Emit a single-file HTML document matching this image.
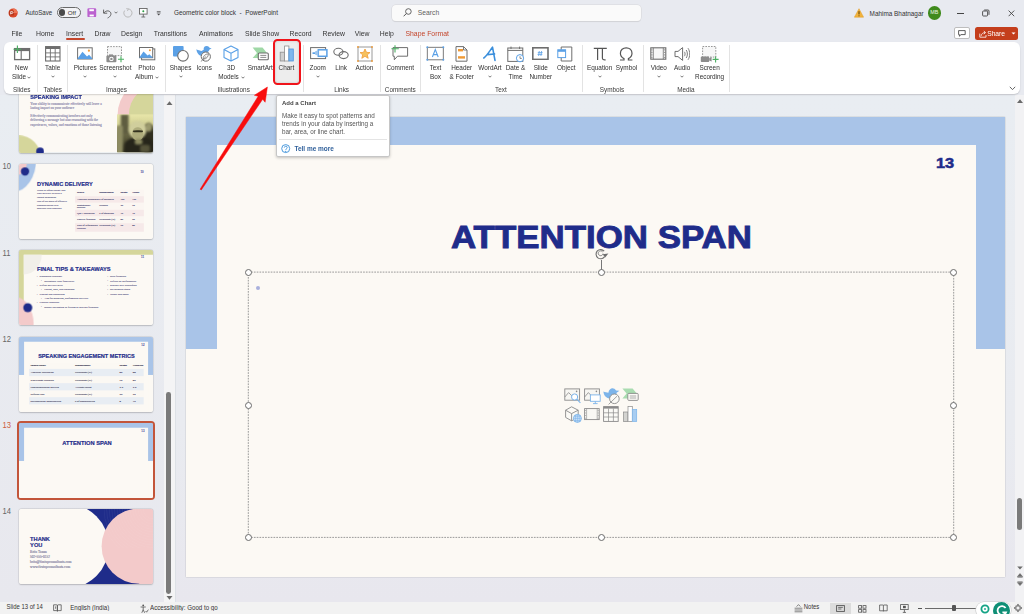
<!DOCTYPE html>
<html><head><meta charset="utf-8"><style>
*{box-sizing:border-box}
html,body{margin:0;padding:0}
body{width:1024px;height:614px;overflow:hidden;position:relative;background:#e7e8ee;font-family:"Liberation Sans",sans-serif;color:#262626}
.a{position:absolute}
.t{position:absolute;white-space:nowrap;line-height:1}
</style></head><body>
<div class="a" style="left:0px;top:0px;width:1024px;height:95px;background:#e8eaf0"></div>
<div class="a" style="left:0px;top:95px;width:164px;height:507px;background:linear-gradient(#e9edf2,#e8e8ee)"></div>
<div class="a" style="left:164px;top:95px;width:11px;height:507px;background:#f4f4f5"></div>
<div class="a" style="left:175px;top:95px;width:840px;height:507px;background:linear-gradient(#e9edf2 0%,#e9ebf0 65%,#e8e7ee 100%)"></div>
<div class="a" style="left:175px;top:95px;width:1px;height:507px;background:#dde1e6"></div>
<div class="a" style="left:1015px;top:95px;width:9px;height:507px;background:#f2f2f4"></div>
<div class="a" style="left:0px;top:602px;width:1024px;height:12px;background:#f2f2f2"></div>
<div class="a" style="left:186px;top:117px;width:819px;height:460px;background:#fcf9f4;box-shadow:0 0 1.2px rgba(0,0,0,.3)"></div>
<div class="a" style="left:186px;top:117px;width:819px;height:232.3px;background:#a9c4e8"></div>
<div class="a" style="left:217px;top:145.3px;width:758.7px;height:431.7px;background:#fcf9f4"></div>
<div class="t" style="left:935.8px;top:156.2px;font-size:14px;font-weight:700;color:#1f2c8a;-webkit-text-stroke:0.5px #1f2c8a;transform-origin:0 0;transform:scaleX(1.17)">13</div>
<div class="t" style="left:451px;top:220.6px;font-size:32px;font-weight:700;color:#1f2c8a;-webkit-text-stroke:0.9px #1f2c8a;transform-origin:0 0;transform:scaleX(1.09)">ATTENTION SPAN</div>
<svg class="a" style="left:0;top:0" width="1024" height="614"><rect x="248.3" y="272.1" width="705.4" height="265.3" fill="none" stroke="#8f8f8f" stroke-width="0.9" stroke-dasharray="1.7 1.1"/></svg>
<div class="a" style="left:600.8px;top:259.6px;width:0.9px;height:10px;background:#777"></div>
<svg class="a" style="left:594px;top:247px" width="16" height="15" viewBox="0 0 16 15"><path d="M10.6 9.6 A4.6 4.6 0 1 1 10.2 4.2" fill="none" stroke="#6e6e6e" stroke-width="1.1"/><path d="M9 6.6 A2.4 2.4 0 1 1 8.6 4.9" fill="none" stroke="#7a7a7a" stroke-width="0.9"/><path d="M8.6 7.2 L14.4 6.4 L11.2 10.4Z" fill="#6e6e6e"/></svg>
<div class="a" style="left:245.0px;top:269.0px;width:7px;height:7px;border:1.3px solid #6b6b6b;border-radius:50%;background:#fff"></div>
<div class="a" style="left:598.0px;top:269.0px;width:7px;height:7px;border:1.3px solid #6b6b6b;border-radius:50%;background:#fff"></div>
<div class="a" style="left:950.3px;top:268.8px;width:7px;height:7px;border:1.3px solid #6b6b6b;border-radius:50%;background:#fff"></div>
<div class="a" style="left:245.0px;top:401.5px;width:7px;height:7px;border:1.3px solid #6b6b6b;border-radius:50%;background:#fff"></div>
<div class="a" style="left:950.3px;top:401.5px;width:7px;height:7px;border:1.3px solid #6b6b6b;border-radius:50%;background:#fff"></div>
<div class="a" style="left:245.0px;top:534.0px;width:7px;height:7px;border:1.3px solid #6b6b6b;border-radius:50%;background:#fff"></div>
<div class="a" style="left:598.0px;top:534.0px;width:7px;height:7px;border:1.3px solid #6b6b6b;border-radius:50%;background:#fff"></div>
<div class="a" style="left:950.3px;top:533.9px;width:7px;height:7px;border:1.3px solid #6b6b6b;border-radius:50%;background:#fff"></div>
<div class="a" style="left:255.5px;top:285.5px;width:4px;height:4px;border-radius:50%;background:#a9b0dc"></div>
<div class="a" style="left:19px;top:77.4px;width:134px;height:75.2px;overflow:hidden;border-radius:2px;box-shadow:0 0 0 0.5px rgba(0,0,0,.10),0 0.5px 1.5px rgba(0,0,0,.16);">
<div class="a" style="left:0;top:0;width:819px;height:460px;background:#fcf9f4;transform-origin:0 0;transform:scale(0.1636)">
<div class="a" style="left:-145px;top:356px;width:280px;height:280px;border-radius:50%;background:#d5d69b"></div>
<div class="a" style="left:105px;top:431px;width:48px;height:48px;border-radius:50%;background:#1f2c8a"></div>
<div class="a" style="left:603px;top:13px;width:432px;height:432px;border-radius:50%;background:#f3caca"></div>
<div class="a" style="left:672px;top:51px;width:356px;height:356px;border-radius:50%;background:#d5d69b"></div>
<div class="a" style="left:600px;top:229px;width:219px;height:231px;overflow:hidden;background:#e3e1a6">
<div class="a" style="left:0px;top:0px;width:219px;height:231px;background:linear-gradient(#e8e6a9 0%,#d4d296 25%,#6b6947 50%,#34331f 100%)"></div>
<div class="a" style="left:22px;top:0px;width:48px;height:120px;background:#5f5d40;filter:blur(6px)"></div>
<div class="a" style="left:-10px;top:70px;width:45px;height:171px;background:#8e8c62;filter:blur(8px)"></div>
<div class="a" style="left:150px;top:60px;width:80px;height:180px;border-radius:40%;background:#2f2e1f;filter:blur(6px)"></div>
<div class="a" style="left:172px;top:48px;width:42px;height:58px;border-radius:50%;background:#9a986c;filter:blur(5px)"></div>
<div class="a" style="left:45px;top:140px;width:185px;height:110px;border-radius:45% 45% 0 0;background:#26251a;filter:blur(5px)"></div>
<div class="a" style="left:70px;top:38px;width:110px;height:112px;border-radius:50%;background:#d0ce9c;filter:blur(5px)"></div>
<div class="a" style="left:92px;top:78px;width:68px;height:82px;border-radius:45%;background:#aeac7c;filter:blur(3px)"></div>
<div class="a" style="left:96px;top:96px;width:62px;height:13px;border-radius:40%;background:#33321f;filter:blur(2.5px)"></div>
<div class="a" style="left:108px;top:150px;width:46px;height:34px;border-radius:30%;background:#8d8b60;filter:blur(5px)"></div>
<div class="a" style="left:140px;top:185px;width:60px;height:46px;border-radius:30%;background:#55533a;filter:blur(6px)"></div>
</div>
<div class="t" style="left:69px;top:104px;font-size:33px;font-weight:700;color:#1f2c8a;-webkit-text-stroke:1.0px #1f2c8a;transform-origin:0 0;transform:scaleX(1.03)">SPEAKING IMPACT</div>
<div class="t" style="left:69px;top:152px;font-size:21px;color:#8886aa;font-weight:400;font-family:'Liberation Serif';-webkit-text-stroke:0.7px #8886aa;">Your ability to communicate effectively will leave a</div>
<div class="t" style="left:69px;top:179px;font-size:21px;color:#8886aa;font-weight:400;font-family:'Liberation Serif';-webkit-text-stroke:0.7px #8886aa;">lasting impact on your audience</div>
<div class="t" style="left:69px;top:230px;font-size:21px;color:#8886aa;font-weight:400;font-family:'Liberation Serif';-webkit-text-stroke:0.7px #8886aa;">Effectively communicating involves not only</div>
<div class="t" style="left:69px;top:255px;font-size:21px;color:#8886aa;font-weight:400;font-family:'Liberation Serif';-webkit-text-stroke:0.7px #8886aa;">delivering a message but also resonating with the</div>
<div class="t" style="left:69px;top:280px;font-size:21px;color:#8886aa;font-weight:400;font-family:'Liberation Serif';-webkit-text-stroke:0.7px #8886aa;">experiences, values, and emotions of those listening</div>
</div></div>
<div class="a" style="left:19px;top:163.8px;width:134px;height:75.2px;overflow:hidden;border-radius:2px;box-shadow:0 0 0 0.5px rgba(0,0,0,.10),0 0.5px 1.5px rgba(0,0,0,.16);">
<div class="a" style="left:0;top:0;width:819px;height:460px;background:#fcf9f4;transform-origin:0 0;transform:scale(0.1636)">
<div class="a" style="left:-170px;top:-230px;width:275px;height:400px;border-radius:50%;background:#a9c4e8"></div>
<div class="a" style="left:-90px;top:-110px;width:140px;height:180px;border-radius:50%;background:#f3caca"></div>
<div class="a" style="left:11px;top:20px;width:51px;height:51px;border-radius:50%;background:#1f2c8a"></div>
<div class="t" style="left:742px;top:38px;font-size:17px;color:#1f2c8a;font-weight:700;font-family:'Liberation Sans';">10</div>
<div class="t" style="left:110px;top:105px;font-size:33px;font-weight:700;color:#1f2c8a;-webkit-text-stroke:1.0px #1f2c8a;transform-origin:0 0;transform:scaleX(1.04)">DYNAMIC DELIVERY</div>
<div class="t" style="left:110px;top:152px;font-size:16px;color:#6a6890;font-weight:400;font-family:'Liberation Serif';-webkit-text-stroke:0.7px #6a6890;">Learn to infuse energy into</div>
<div class="t" style="left:110px;top:172px;font-size:16px;color:#6a6890;font-weight:400;font-family:'Liberation Serif';-webkit-text-stroke:0.7px #6a6890;">your delivery to leave a</div>
<div class="t" style="left:110px;top:192px;font-size:16px;color:#6a6890;font-weight:400;font-family:'Liberation Serif';-webkit-text-stroke:0.7px #6a6890;">lasting impression</div>
<div class="t" style="left:110px;top:222px;font-size:16px;color:#6a6890;font-weight:400;font-family:'Liberation Serif';-webkit-text-stroke:0.7px #6a6890;">One of the goals of effective</div>
<div class="t" style="left:110px;top:242px;font-size:16px;color:#6a6890;font-weight:400;font-family:'Liberation Serif';-webkit-text-stroke:0.7px #6a6890;">communication is to</div>
<div class="t" style="left:110px;top:262px;font-size:16px;color:#6a6890;font-weight:400;font-family:'Liberation Serif';-webkit-text-stroke:0.7px #6a6890;">motivate your audience</div>
<div class="a" style="left:343px;top:157px;width:420px;height:257px;background:#fbf6f2"></div>
<div class="a" style="left:343px;top:197px;width:420px;height:39px;background:#f6e9e9"></div>
<div class="a" style="left:343px;top:280px;width:420px;height:39px;background:#f6e9e9"></div>
<div class="a" style="left:343px;top:362px;width:420px;height:52px;background:#f6e9e9"></div>
<div class="t" style="left:355px;top:168px;font-size:15px;color:#44426e;font-weight:700;font-family:'Liberation Serif';-webkit-text-stroke:0.7px #44426e;">Metric</div>
<div class="t" style="left:490px;top:168px;font-size:15px;color:#44426e;font-weight:700;font-family:'Liberation Serif';-webkit-text-stroke:0.7px #44426e;">Measurement</div>
<div class="t" style="left:620px;top:168px;font-size:15px;color:#44426e;font-weight:700;font-family:'Liberation Serif';-webkit-text-stroke:0.7px #44426e;">Target</div>
<div class="t" style="left:692px;top:168px;font-size:15px;color:#44426e;font-weight:700;font-family:'Liberation Serif';-webkit-text-stroke:0.7px #44426e;">Actual</div>
<div class="t" style="left:355px;top:207px;font-size:16px;color:#55537e;font-weight:400;font-family:'Liberation Serif';-webkit-text-stroke:0.7px #55537e;">Audience attendance</div>
<div class="t" style="left:490px;top:207px;font-size:16px;color:#55537e;font-weight:400;font-family:'Liberation Serif';-webkit-text-stroke:0.7px #55537e;"># of attendees</div>
<div class="t" style="left:620px;top:207px;font-size:16px;color:#55537e;font-weight:400;font-family:'Liberation Serif';-webkit-text-stroke:0.7px #55537e;">150</div>
<div class="t" style="left:692px;top:207px;font-size:16px;color:#55537e;font-weight:400;font-family:'Liberation Serif';-webkit-text-stroke:0.7px #55537e;">145</div>
<div class="t" style="left:355px;top:242px;font-size:16px;color:#55537e;font-weight:400;font-family:'Liberation Serif';-webkit-text-stroke:0.7px #55537e;">Engagement</div>
<div class="t" style="left:490px;top:242px;font-size:16px;color:#55537e;font-weight:400;font-family:'Liberation Serif';-webkit-text-stroke:0.7px #55537e;">Minutes</div>
<div class="t" style="left:620px;top:242px;font-size:16px;color:#55537e;font-weight:400;font-family:'Liberation Serif';-webkit-text-stroke:0.7px #55537e;">40</div>
<div class="t" style="left:692px;top:242px;font-size:16px;color:#55537e;font-weight:400;font-family:'Liberation Serif';-webkit-text-stroke:0.7px #55537e;">75</div>
<div class="t" style="left:355px;top:290px;font-size:16px;color:#55537e;font-weight:400;font-family:'Liberation Serif';-webkit-text-stroke:0.7px #55537e;">Q&amp;A interaction</div>
<div class="t" style="left:490px;top:290px;font-size:16px;color:#55537e;font-weight:400;font-family:'Liberation Serif';-webkit-text-stroke:0.7px #55537e;"># of questions</div>
<div class="t" style="left:620px;top:290px;font-size:16px;color:#55537e;font-weight:400;font-family:'Liberation Serif';-webkit-text-stroke:0.7px #55537e;">10</div>
<div class="t" style="left:692px;top:290px;font-size:16px;color:#55537e;font-weight:400;font-family:'Liberation Serif';-webkit-text-stroke:0.7px #55537e;">15</div>
<div class="t" style="left:355px;top:331px;font-size:16px;color:#55537e;font-weight:400;font-family:'Liberation Serif';-webkit-text-stroke:0.7px #55537e;">Positive feedback</div>
<div class="t" style="left:490px;top:331px;font-size:16px;color:#55537e;font-weight:400;font-family:'Liberation Serif';-webkit-text-stroke:0.7px #55537e;">Percentage (%)</div>
<div class="t" style="left:620px;top:331px;font-size:16px;color:#55537e;font-weight:400;font-family:'Liberation Serif';-webkit-text-stroke:0.7px #55537e;">80</div>
<div class="t" style="left:692px;top:331px;font-size:16px;color:#55537e;font-weight:400;font-family:'Liberation Serif';-webkit-text-stroke:0.7px #55537e;">95</div>
<div class="t" style="left:355px;top:369px;font-size:16px;color:#55537e;font-weight:400;font-family:'Liberation Serif';-webkit-text-stroke:0.7px #55537e;">Rate of information</div>
<div class="t" style="left:490px;top:369px;font-size:16px;color:#55537e;font-weight:400;font-family:'Liberation Serif';-webkit-text-stroke:0.7px #55537e;">Percentage (%)</div>
<div class="t" style="left:620px;top:369px;font-size:16px;color:#55537e;font-weight:400;font-family:'Liberation Serif';-webkit-text-stroke:0.7px #55537e;">70</div>
<div class="t" style="left:692px;top:369px;font-size:16px;color:#55537e;font-weight:400;font-family:'Liberation Serif';-webkit-text-stroke:0.7px #55537e;">85</div>
<div class="t" style="left:355px;top:260px;font-size:15px;color:#5a5888;font-weight:400;font-family:'Liberation Serif';-webkit-text-stroke:0.7px #5a5888;">duration</div>
<div class="t" style="left:355px;top:387px;font-size:15px;color:#5a5888;font-weight:400;font-family:'Liberation Serif';-webkit-text-stroke:0.7px #5a5888;">retention</div>
</div></div>
<div class="a" style="left:19px;top:250.2px;width:134px;height:75.2px;overflow:hidden;border-radius:2px;box-shadow:0 0 0 0.5px rgba(0,0,0,.10),0 0.5px 1.5px rgba(0,0,0,.16);">
<div class="a" style="left:0;top:0;width:819px;height:460px;background:#fcf9f4;transform-origin:0 0;transform:scale(0.1636)">
<div class="a" style="left:0px;top:0px;width:819px;height:29px;background:#d5d69b"></div>
<div class="a" style="left:0px;top:0px;width:29px;height:330px;background:#d5d69b"></div>
<div class="a" style="left:29px;top:29px;width:110px;height:120px;border-radius:0 0 100% 0;background:#f1efe9"></div>
<div class="a" style="left:-150px;top:285px;width:240px;height:340px;border-radius:50%;background:#f3caca"></div>
<div class="a" style="left:26px;top:325px;width:55px;height:55px;border-radius:50%;background:#1f2c8a"></div>
<div class="t" style="left:746px;top:36px;font-size:17px;color:#1f2c8a;font-weight:700;font-family:'Liberation Sans';">11</div>
<div class="t" style="left:110px;top:99px;font-size:33px;font-weight:700;color:#1f2c8a;-webkit-text-stroke:1.0px #1f2c8a;transform-origin:0 0;transform:scaleX(1.06)">FINAL TIPS &amp; TAKEAWAYS</div>
<div class="t" style="left:108px;top:153px;font-size:14px;color:#6d6b90;font-weight:400;font-family:'Liberation Serif';-webkit-text-stroke:0.7px #6d6b90;">•</div>
<div class="t" style="left:126px;top:153px;font-size:17px;color:#6a6890;font-weight:400;font-family:'Liberation Serif';-webkit-text-stroke:0.7px #6a6890;">Consistent rehearsal</div>
<div class="t" style="left:134px;top:181px;font-size:14px;color:#6d6b90;font-weight:400;font-family:'Liberation Serif';-webkit-text-stroke:0.7px #6d6b90;">•</div>
<div class="t" style="left:154px;top:181px;font-size:17px;color:#6a6890;font-weight:400;font-family:'Liberation Serif';-webkit-text-stroke:0.7px #6a6890;">Strengthen your familiarity</div>
<div class="t" style="left:108px;top:207px;font-size:14px;color:#6d6b90;font-weight:400;font-family:'Liberation Serif';-webkit-text-stroke:0.7px #6d6b90;">•</div>
<div class="t" style="left:126px;top:207px;font-size:17px;color:#6a6890;font-weight:400;font-family:'Liberation Serif';-webkit-text-stroke:0.7px #6a6890;">Refine delivery style</div>
<div class="t" style="left:134px;top:233px;font-size:14px;color:#6d6b90;font-weight:400;font-family:'Liberation Serif';-webkit-text-stroke:0.7px #6d6b90;">•</div>
<div class="t" style="left:154px;top:233px;font-size:17px;color:#6a6890;font-weight:400;font-family:'Liberation Serif';-webkit-text-stroke:0.7px #6a6890;">Pacing, tone, and emphasis</div>
<div class="t" style="left:108px;top:262px;font-size:14px;color:#6d6b90;font-weight:400;font-family:'Liberation Serif';-webkit-text-stroke:0.7px #6d6b90;">•</div>
<div class="t" style="left:126px;top:262px;font-size:17px;color:#6a6890;font-weight:400;font-family:'Liberation Serif';-webkit-text-stroke:0.7px #6a6890;">Timing and transitions</div>
<div class="t" style="left:134px;top:287px;font-size:14px;color:#6d6b90;font-weight:400;font-family:'Liberation Serif';-webkit-text-stroke:0.7px #6d6b90;">•</div>
<div class="t" style="left:154px;top:287px;font-size:17px;color:#6a6890;font-weight:400;font-family:'Liberation Serif';-webkit-text-stroke:0.7px #6a6890;">Aim for seamless, professional delivery</div>
<div class="t" style="left:108px;top:311px;font-size:14px;color:#6d6b90;font-weight:400;font-family:'Liberation Serif';-webkit-text-stroke:0.7px #6d6b90;">•</div>
<div class="t" style="left:126px;top:311px;font-size:17px;color:#6a6890;font-weight:400;font-family:'Liberation Serif';-webkit-text-stroke:0.7px #6a6890;">Practice audience</div>
<div class="t" style="left:134px;top:340px;font-size:14px;color:#6d6b90;font-weight:400;font-family:'Liberation Serif';-webkit-text-stroke:0.7px #6d6b90;">•</div>
<div class="t" style="left:154px;top:340px;font-size:17px;color:#6a6890;font-weight:400;font-family:'Liberation Serif';-webkit-text-stroke:0.7px #6a6890;">Gather colleagues or friends to provide feedback</div>
<div class="t" style="left:540px;top:153px;font-size:14px;color:#6d6b90;font-weight:400;font-family:'Liberation Serif';-webkit-text-stroke:0.7px #6d6b90;">•</div>
<div class="t" style="left:556px;top:153px;font-size:17px;color:#6a6890;font-weight:400;font-family:'Liberation Serif';-webkit-text-stroke:0.7px #6a6890;">Seek feedback</div>
<div class="t" style="left:540px;top:181px;font-size:14px;color:#6d6b90;font-weight:400;font-family:'Liberation Serif';-webkit-text-stroke:0.7px #6d6b90;">•</div>
<div class="t" style="left:556px;top:181px;font-size:17px;color:#6a6890;font-weight:400;font-family:'Liberation Serif';-webkit-text-stroke:0.7px #6a6890;">Reflect on performance</div>
<div class="t" style="left:540px;top:207px;font-size:14px;color:#6d6b90;font-weight:400;font-family:'Liberation Serif';-webkit-text-stroke:0.7px #6d6b90;">•</div>
<div class="t" style="left:556px;top:207px;font-size:17px;color:#6a6890;font-weight:400;font-family:'Liberation Serif';-webkit-text-stroke:0.7px #6a6890;">Explore new techniques</div>
<div class="t" style="left:540px;top:233px;font-size:14px;color:#6d6b90;font-weight:400;font-family:'Liberation Serif';-webkit-text-stroke:0.7px #6d6b90;">•</div>
<div class="t" style="left:556px;top:233px;font-size:17px;color:#6a6890;font-weight:400;font-family:'Liberation Serif';-webkit-text-stroke:0.7px #6a6890;">Set personal goals</div>
<div class="t" style="left:540px;top:262px;font-size:14px;color:#6d6b90;font-weight:400;font-family:'Liberation Serif';-webkit-text-stroke:0.7px #6d6b90;">•</div>
<div class="t" style="left:556px;top:262px;font-size:17px;color:#6a6890;font-weight:400;font-family:'Liberation Serif';-webkit-text-stroke:0.7px #6a6890;">Iterate and adapt</div>
</div></div>
<div class="a" style="left:19px;top:336.5px;width:134px;height:75.2px;overflow:hidden;border-radius:2px;box-shadow:0 0 0 0.5px rgba(0,0,0,.10),0 0.5px 1.5px rgba(0,0,0,.16);">
<div class="a" style="left:0;top:0;width:819px;height:460px;background:#fcf9f4;transform-origin:0 0;transform:scale(0.1636)">
<div class="a" style="left:0px;top:0px;width:819px;height:232px;background:#a9c4e8"></div>
<div class="a" style="left:31px;top:29px;width:758px;height:431px;background:#fcf9f4"></div>
<div class="t" style="left:748px;top:38px;font-size:17px;color:#1f2c8a;font-weight:700;font-family:'Liberation Sans';">12</div>
<div class="t" style="left:117px;top:100px;font-size:33px;font-weight:700;color:#1f2c8a;-webkit-text-stroke:1.0px #1f2c8a;transform-origin:0 0;transform:scaleX(1.025)">SPEAKING ENGAGEMENT METRICS</div>
<div class="a" style="left:62px;top:160px;width:700px;height:255px;background:#fbf8f3"></div>
<div class="a" style="left:62px;top:195px;width:700px;height:44px;background:#e8edf3"></div>
<div class="a" style="left:62px;top:282px;width:700px;height:44px;background:#e8edf3"></div>
<div class="a" style="left:62px;top:368px;width:700px;height:44px;background:#e8edf3"></div>
<div class="t" style="left:70px;top:165px;font-size:16px;color:#3e3c55;font-weight:700;font-family:'Liberation Serif';-webkit-text-stroke:0.7px #3e3c55;">Impact factor</div>
<div class="t" style="left:342px;top:165px;font-size:16px;color:#3e3c55;font-weight:700;font-family:'Liberation Serif';-webkit-text-stroke:0.7px #3e3c55;">Measurement</div>
<div class="t" style="left:615px;top:165px;font-size:16px;color:#3e3c55;font-weight:700;font-family:'Liberation Serif';-webkit-text-stroke:0.7px #3e3c55;">Target</div>
<div class="t" style="left:696px;top:165px;font-size:16px;color:#3e3c55;font-weight:700;font-family:'Liberation Serif';-webkit-text-stroke:0.7px #3e3c55;">Achieved</div>
<div class="t" style="left:70px;top:207px;font-size:17px;color:#55536e;font-weight:400;font-family:'Liberation Serif';-webkit-text-stroke:0.7px #55536e;">Audience interaction</div>
<div class="t" style="left:342px;top:207px;font-size:17px;color:#55536e;font-weight:400;font-family:'Liberation Serif';-webkit-text-stroke:0.7px #55536e;">Percentage (%)</div>
<div class="t" style="left:615px;top:207px;font-size:17px;color:#55536e;font-weight:400;font-family:'Liberation Serif';-webkit-text-stroke:0.7px #55536e;">85</div>
<div class="t" style="left:696px;top:207px;font-size:17px;color:#55536e;font-weight:400;font-family:'Liberation Serif';-webkit-text-stroke:0.7px #55536e;">88</div>
<div class="t" style="left:70px;top:254px;font-size:17px;color:#55536e;font-weight:400;font-family:'Liberation Serif';-webkit-text-stroke:0.7px #55536e;">Knowledge retention</div>
<div class="t" style="left:342px;top:254px;font-size:17px;color:#55536e;font-weight:400;font-family:'Liberation Serif';-webkit-text-stroke:0.7px #55536e;">Percentage (%)</div>
<div class="t" style="left:615px;top:254px;font-size:17px;color:#55536e;font-weight:400;font-family:'Liberation Serif';-webkit-text-stroke:0.7px #55536e;">75</div>
<div class="t" style="left:696px;top:254px;font-size:17px;color:#55536e;font-weight:400;font-family:'Liberation Serif';-webkit-text-stroke:0.7px #55536e;">80</div>
<div class="t" style="left:70px;top:296px;font-size:17px;color:#55536e;font-weight:400;font-family:'Liberation Serif';-webkit-text-stroke:0.7px #55536e;">Post-presentation surveys</div>
<div class="t" style="left:342px;top:296px;font-size:17px;color:#55536e;font-weight:400;font-family:'Liberation Serif';-webkit-text-stroke:0.7px #55536e;">Average rating</div>
<div class="t" style="left:615px;top:296px;font-size:17px;color:#55536e;font-weight:400;font-family:'Liberation Serif';-webkit-text-stroke:0.7px #55536e;">4.2</div>
<div class="t" style="left:696px;top:296px;font-size:17px;color:#55536e;font-weight:400;font-family:'Liberation Serif';-webkit-text-stroke:0.7px #55536e;">4.5</div>
<div class="t" style="left:70px;top:338px;font-size:17px;color:#55536e;font-weight:400;font-family:'Liberation Serif';-webkit-text-stroke:0.7px #55536e;">Referral rate</div>
<div class="t" style="left:342px;top:338px;font-size:17px;color:#55536e;font-weight:400;font-family:'Liberation Serif';-webkit-text-stroke:0.7px #55536e;">Percentage (%)</div>
<div class="t" style="left:615px;top:338px;font-size:17px;color:#55536e;font-weight:400;font-family:'Liberation Serif';-webkit-text-stroke:0.7px #55536e;">30</div>
<div class="t" style="left:696px;top:338px;font-size:17px;color:#55536e;font-weight:400;font-family:'Liberation Serif';-webkit-text-stroke:0.7px #55536e;">32</div>
<div class="t" style="left:70px;top:383px;font-size:17px;color:#55536e;font-weight:400;font-family:'Liberation Serif';-webkit-text-stroke:0.7px #55536e;">Collaboration opportunities</div>
<div class="t" style="left:342px;top:383px;font-size:17px;color:#55536e;font-weight:400;font-family:'Liberation Serif';-webkit-text-stroke:0.7px #55536e;"># of opportunities</div>
<div class="t" style="left:615px;top:383px;font-size:17px;color:#55536e;font-weight:400;font-family:'Liberation Serif';-webkit-text-stroke:0.7px #55536e;">8</div>
<div class="t" style="left:696px;top:383px;font-size:17px;color:#55536e;font-weight:400;font-family:'Liberation Serif';-webkit-text-stroke:0.7px #55536e;">10</div>
</div></div>
<div class="a" style="left:17px;top:420.9px;width:138px;height:79.2px;border:2px solid #c3553a;border-radius:4px"></div>
<div class="a" style="left:19px;top:422.9px;width:134px;height:75.2px;overflow:hidden;border-radius:2px;box-shadow:0 0 0 0.5px rgba(0,0,0,.10),0 0.5px 1.5px rgba(0,0,0,.16);border-radius:1.5px;box-shadow:none">
<div class="a" style="left:0;top:0;width:819px;height:460px;background:#fcf9f4;transform-origin:0 0;transform:scale(0.1636)">
<div class="a" style="left:0px;top:0px;width:819px;height:232px;background:#a9c4e8"></div>
<div class="a" style="left:31px;top:29px;width:758px;height:431px;background:#fcf9f4"></div>
<div class="t" style="left:748px;top:38px;font-size:17px;color:#1f2c8a;font-weight:700;font-family:'Liberation Sans';">13</div>
<div class="t" style="left:264px;top:104px;font-size:33px;font-weight:700;color:#1f2c8a;-webkit-text-stroke:1px #1f2c8a;transform-origin:0 0;transform:scaleX(1.063)">ATTENTION SPAN</div>
</div></div>
<div class="a" style="left:19px;top:509.3px;width:134px;height:75.2px;overflow:hidden;border-radius:2px;box-shadow:0 0 0 0.5px rgba(0,0,0,.10),0 0.5px 1.5px rgba(0,0,0,.16);">
<div class="a" style="left:0;top:0;width:819px;height:460px;background:#fcf9f4;transform-origin:0 0;transform:scale(0.1636)">
<div class="a" style="left:290px;top:0px;width:529px;height:460px;background:#1f2c8a"></div>
<div class="a" style="left:31px;top:-32px;width:518px;height:518px;border-radius:50%;background:#fcf9f4"></div>
<div class="a" style="left:505px;top:-3px;width:460px;height:460px;border-radius:50%;background:#f3caca"></div>
<div class="a" style="left:735px;top:0px;width:84px;height:460px;background:#f3caca"></div>
<div class="a" style="left:520px;top:0;width:299px;height:240px;overflow:hidden">
<div class="a" style="left:239px;top:-60px;width:120px;height:120px;border-radius:50%;border:1.4px solid rgba(255,255,255,.30)"></div>
<div class="a" style="left:223px;top:-76px;width:152px;height:152px;border-radius:50%;border:1.4px solid rgba(255,255,255,.30)"></div>
<div class="a" style="left:207px;top:-92px;width:184px;height:184px;border-radius:50%;border:1.4px solid rgba(255,255,255,.30)"></div>
<div class="a" style="left:191px;top:-108px;width:216px;height:216px;border-radius:50%;border:1.4px solid rgba(255,255,255,.30)"></div>
<div class="a" style="left:175px;top:-124px;width:248px;height:248px;border-radius:50%;border:1.4px solid rgba(255,255,255,.30)"></div>
<div class="a" style="left:159px;top:-140px;width:280px;height:280px;border-radius:50%;border:1.4px solid rgba(255,255,255,.30)"></div>
<div class="a" style="left:143px;top:-156px;width:312px;height:312px;border-radius:50%;border:1.4px solid rgba(255,255,255,.30)"></div>
<div class="a" style="left:127px;top:-172px;width:344px;height:344px;border-radius:50%;border:1.4px solid rgba(255,255,255,.30)"></div>
<div class="a" style="left:111px;top:-188px;width:376px;height:376px;border-radius:50%;border:1.4px solid rgba(255,255,255,.30)"></div>
<div class="a" style="left:95px;top:-204px;width:408px;height:408px;border-radius:50%;border:1.4px solid rgba(255,255,255,.30)"></div>
<div class="a" style="left:79px;top:-220px;width:440px;height:440px;border-radius:50%;border:1.4px solid rgba(255,255,255,.30)"></div>
<div class="a" style="left:63px;top:-236px;width:472px;height:472px;border-radius:50%;border:1.4px solid rgba(255,255,255,.30)"></div>
<div class="a" style="left:47px;top:-252px;width:504px;height:504px;border-radius:50%;border:1.4px solid rgba(255,255,255,.30)"></div>
<div class="a" style="left:31px;top:-268px;width:536px;height:536px;border-radius:50%;border:1.4px solid rgba(255,255,255,.30)"></div>
<div class="a" style="left:15px;top:-284px;width:568px;height:568px;border-radius:50%;border:1.4px solid rgba(255,255,255,.30)"></div>
<div class="a" style="left:-1px;top:-300px;width:600px;height:600px;border-radius:50%;border:1.4px solid rgba(255,255,255,.30)"></div>
<div class="a" style="left:-17px;top:-316px;width:632px;height:632px;border-radius:50%;border:1.4px solid rgba(255,255,255,.30)"></div>
</div>
<div class="t" style="left:68px;top:166px;font-size:32px;font-weight:700;color:#1f2c8a;-webkit-text-stroke:1.0px #1f2c8a;transform-origin:0 0;transform:scaleX(1.08)">THANK</div>
<div class="t" style="left:68px;top:203px;font-size:32px;font-weight:700;color:#1f2c8a;-webkit-text-stroke:1.0px #1f2c8a;transform-origin:0 0;transform:scaleX(1.08)">YOU</div>
<div class="t" style="left:68px;top:254px;font-size:21.4px;color:#7f7da0;font-weight:400;font-family:'Liberation Serif';-webkit-text-stroke:0.7px #7f7da0;">Brita Tamm</div>
<div class="t" style="left:68px;top:284px;font-size:21.4px;color:#7f7da0;font-weight:400;font-family:'Liberation Serif';-webkit-text-stroke:0.7px #7f7da0;">502-555-0152</div>
<div class="t" style="left:68px;top:314px;font-size:21.4px;color:#7f7da0;font-weight:400;font-family:'Liberation Serif';-webkit-text-stroke:0.7px #7f7da0;">brita@firstupconsultants.com</div>
<div class="t" style="left:68px;top:344px;font-size:21.4px;color:#7f7da0;font-weight:400;font-family:'Liberation Serif';-webkit-text-stroke:0.7px #7f7da0;">www.firstupconsultants.com</div>
</div></div>
<div class="t" style="left:2.6px;top:162.0px;font-size:7.6px;color:#666;transform-origin:0 0;transform:scaleY(1.1)">10</div>
<div class="t" style="left:2.6px;top:248.8px;font-size:7.6px;color:#666;transform-origin:0 0;transform:scaleY(1.1)">11</div>
<div class="t" style="left:2.6px;top:335.2px;font-size:7.6px;color:#666;transform-origin:0 0;transform:scaleY(1.1)">12</div>
<div class="t" style="left:2.6px;top:420.8px;font-size:7.6px;color:#cd5d3e;transform-origin:0 0;transform:scaleY(1.1)">13</div>
<div class="t" style="left:2.6px;top:507.2px;font-size:7.6px;color:#666;transform-origin:0 0;transform:scaleY(1.1)">14</div>
<div class="a" style="left:4px;top:42px;width:1016px;height:52px;background:#fff;border-radius:6px;box-shadow:0 1px 1.5px rgba(0,0,0,.16)"></div>
<div class="a" style="left:36.9px;top:45px;width:1px;height:47px;background:#e3e3e3"></div>
<div class="a" style="left:67.4px;top:45px;width:1px;height:47px;background:#e3e3e3"></div>
<div class="a" style="left:164.8px;top:45px;width:1px;height:47px;background:#e3e3e3"></div>
<div class="a" style="left:302.5px;top:45px;width:1px;height:47px;background:#e3e3e3"></div>
<div class="a" style="left:380.3px;top:45px;width:1px;height:47px;background:#e3e3e3"></div>
<div class="a" style="left:419.8px;top:45px;width:1px;height:47px;background:#e3e3e3"></div>
<div class="a" style="left:581.6px;top:45px;width:1px;height:47px;background:#e3e3e3"></div>
<div class="a" style="left:643.3px;top:45px;width:1px;height:47px;background:#e3e3e3"></div>
<div class="a" style="left:729.2px;top:45px;width:1px;height:47px;background:#e3e3e3"></div>
<div class="a" style="left:273.1px;top:39.1px;width:28.4px;height:46.1px;background:#ededed;border:2.3px solid #f0141b;border-radius:4.5px;box-shadow:inset 0 0 2.5px rgba(0,0,0,.18)"></div>
<div class="t" style="left:-78.50px;width:200px;text-align:center;top:65.27px;font-size:6.4px;color:#303030;font-weight:400;">New</div>
<div class="t" style="left:-81.00px;width:200px;text-align:center;top:74.07px;font-size:6.4px;color:#303030;font-weight:400;">Slide</div>
<div class="t" style="left:-47.40px;width:200px;text-align:center;top:65.27px;font-size:6.4px;color:#303030;font-weight:400;">Table</div>
<svg class="a" style="left:50.6px;top:74.9px" width="4" height="3" viewBox="0 0 4 3"><path d="M0.5 0.7 L2 2.2 L3.5 0.7" fill="none" stroke="#555" stroke-width="0.8"/></svg>
<div class="t" style="left:-14.80px;width:200px;text-align:center;top:65.27px;font-size:6.4px;color:#303030;font-weight:400;">Pictures</div>
<svg class="a" style="left:83.2px;top:74.9px" width="4" height="3" viewBox="0 0 4 3"><path d="M0.5 0.7 L2 2.2 L3.5 0.7" fill="none" stroke="#555" stroke-width="0.8"/></svg>
<div class="t" style="left:15.30px;width:200px;text-align:center;top:65.27px;font-size:6.4px;color:#303030;font-weight:400;">Screenshot</div>
<svg class="a" style="left:113.3px;top:74.9px" width="4" height="3" viewBox="0 0 4 3"><path d="M0.5 0.7 L2 2.2 L3.5 0.7" fill="none" stroke="#555" stroke-width="0.8"/></svg>
<div class="t" style="left:46.60px;width:200px;text-align:center;top:65.27px;font-size:6.4px;color:#303030;font-weight:400;">Photo</div>
<div class="t" style="left:44.10px;width:200px;text-align:center;top:74.07px;font-size:6.4px;color:#303030;font-weight:400;">Album</div>
<div class="t" style="left:80.50px;width:200px;text-align:center;top:65.27px;font-size:6.4px;color:#303030;font-weight:400;">Shapes</div>
<svg class="a" style="left:178.5px;top:74.9px" width="4" height="3" viewBox="0 0 4 3"><path d="M0.5 0.7 L2 2.2 L3.5 0.7" fill="none" stroke="#555" stroke-width="0.8"/></svg>
<div class="t" style="left:104.20px;width:200px;text-align:center;top:65.27px;font-size:6.4px;color:#303030;font-weight:400;">Icons</div>
<div class="t" style="left:131.00px;width:200px;text-align:center;top:65.27px;font-size:6.4px;color:#303030;font-weight:400;">3D</div>
<div class="t" style="left:128.50px;width:200px;text-align:center;top:74.07px;font-size:6.4px;color:#303030;font-weight:400;">Models</div>
<div class="t" style="left:160.30px;width:200px;text-align:center;top:65.27px;font-size:6.4px;color:#303030;font-weight:400;">SmartArt</div>
<div class="t" style="left:186.40px;width:200px;text-align:center;top:65.27px;font-size:6.4px;color:#303030;font-weight:400;">Chart</div>
<div class="t" style="left:217.70px;width:200px;text-align:center;top:65.27px;font-size:6.4px;color:#303030;font-weight:400;">Zoom</div>
<svg class="a" style="left:315.7px;top:74.9px" width="4" height="3" viewBox="0 0 4 3"><path d="M0.5 0.7 L2 2.2 L3.5 0.7" fill="none" stroke="#555" stroke-width="0.8"/></svg>
<div class="t" style="left:241.20px;width:200px;text-align:center;top:65.27px;font-size:6.4px;color:#303030;font-weight:400;">Link</div>
<div class="t" style="left:264.40px;width:200px;text-align:center;top:65.27px;font-size:6.4px;color:#303030;font-weight:400;">Action</div>
<div class="t" style="left:300.30px;width:200px;text-align:center;top:65.27px;font-size:6.4px;color:#303030;font-weight:400;">Comment</div>
<div class="t" style="left:335.50px;width:200px;text-align:center;top:65.27px;font-size:6.4px;color:#303030;font-weight:400;">Text</div>
<div class="t" style="left:335.50px;width:200px;text-align:center;top:74.07px;font-size:6.4px;color:#303030;font-weight:400;">Box</div>
<div class="t" style="left:361.70px;width:200px;text-align:center;top:65.27px;font-size:6.4px;color:#303030;font-weight:400;">Header</div>
<div class="t" style="left:361.70px;width:200px;text-align:center;top:74.07px;font-size:6.4px;color:#303030;font-weight:400;">&amp; Footer</div>
<div class="t" style="left:390.00px;width:200px;text-align:center;top:65.27px;font-size:6.4px;color:#303030;font-weight:400;">WordArt</div>
<svg class="a" style="left:488px;top:74.9px" width="4" height="3" viewBox="0 0 4 3"><path d="M0.5 0.7 L2 2.2 L3.5 0.7" fill="none" stroke="#555" stroke-width="0.8"/></svg>
<div class="t" style="left:415.50px;width:200px;text-align:center;top:65.27px;font-size:6.4px;color:#303030;font-weight:400;">Date &amp;</div>
<div class="t" style="left:415.50px;width:200px;text-align:center;top:74.07px;font-size:6.4px;color:#303030;font-weight:400;">Time</div>
<div class="t" style="left:440.80px;width:200px;text-align:center;top:65.27px;font-size:6.4px;color:#303030;font-weight:400;">Slide</div>
<div class="t" style="left:440.80px;width:200px;text-align:center;top:74.07px;font-size:6.4px;color:#303030;font-weight:400;">Number</div>
<div class="t" style="left:466.30px;width:200px;text-align:center;top:65.27px;font-size:6.4px;color:#303030;font-weight:400;">Object</div>
<div class="t" style="left:499.60px;width:200px;text-align:center;top:65.27px;font-size:6.4px;color:#303030;font-weight:400;">Equation</div>
<svg class="a" style="left:597.6px;top:74.9px" width="4" height="3" viewBox="0 0 4 3"><path d="M0.5 0.7 L2 2.2 L3.5 0.7" fill="none" stroke="#555" stroke-width="0.8"/></svg>
<div class="t" style="left:526.50px;width:200px;text-align:center;top:65.27px;font-size:6.4px;color:#303030;font-weight:400;">Symbol</div>
<div class="t" style="left:558.80px;width:200px;text-align:center;top:65.27px;font-size:6.4px;color:#303030;font-weight:400;">Video</div>
<svg class="a" style="left:656.8px;top:74.9px" width="4" height="3" viewBox="0 0 4 3"><path d="M0.5 0.7 L2 2.2 L3.5 0.7" fill="none" stroke="#555" stroke-width="0.8"/></svg>
<div class="t" style="left:582.20px;width:200px;text-align:center;top:65.27px;font-size:6.4px;color:#303030;font-weight:400;">Audio</div>
<svg class="a" style="left:680.2px;top:74.9px" width="4" height="3" viewBox="0 0 4 3"><path d="M0.5 0.7 L2 2.2 L3.5 0.7" fill="none" stroke="#555" stroke-width="0.8"/></svg>
<div class="t" style="left:609.60px;width:200px;text-align:center;top:65.27px;font-size:6.4px;color:#303030;font-weight:400;">Screen</div>
<div class="t" style="left:609.60px;width:200px;text-align:center;top:74.07px;font-size:6.4px;color:#303030;font-weight:400;">Recording</div>
<svg class="a" style="left:27px;top:75.9px" width="4" height="3" viewBox="0 0 4 3"><path d="M0.5 0.7 L2 2.2 L3.5 0.7" fill="none" stroke="#555" stroke-width="0.8"/></svg>
<svg class="a" style="left:155px;top:75.9px" width="4" height="3" viewBox="0 0 4 3"><path d="M0.5 0.7 L2 2.2 L3.5 0.7" fill="none" stroke="#555" stroke-width="0.8"/></svg>
<svg class="a" style="left:241px;top:75.9px" width="4" height="3" viewBox="0 0 4 3"><path d="M0.5 0.7 L2 2.2 L3.5 0.7" fill="none" stroke="#555" stroke-width="0.8"/></svg>
<div class="t" style="left:-78.30px;width:200px;text-align:center;top:87.17px;font-size:6.4px;color:#3a3a3a;font-weight:400;">Slides</div>
<div class="t" style="left:-47.30px;width:200px;text-align:center;top:87.17px;font-size:6.4px;color:#3a3a3a;font-weight:400;">Tables</div>
<div class="t" style="left:16.50px;width:200px;text-align:center;top:87.17px;font-size:6.4px;color:#3a3a3a;font-weight:400;">Images</div>
<div class="t" style="left:133.70px;width:200px;text-align:center;top:87.17px;font-size:6.4px;color:#3a3a3a;font-weight:400;">Illustrations</div>
<div class="t" style="left:241.60px;width:200px;text-align:center;top:87.17px;font-size:6.4px;color:#3a3a3a;font-weight:400;">Links</div>
<div class="t" style="left:300.30px;width:200px;text-align:center;top:87.17px;font-size:6.4px;color:#3a3a3a;font-weight:400;">Comments</div>
<div class="t" style="left:400.90px;width:200px;text-align:center;top:87.17px;font-size:6.4px;color:#3a3a3a;font-weight:400;">Text</div>
<div class="t" style="left:512.00px;width:200px;text-align:center;top:87.17px;font-size:6.4px;color:#3a3a3a;font-weight:400;">Symbols</div>
<div class="t" style="left:585.90px;width:200px;text-align:center;top:87.17px;font-size:6.4px;color:#3a3a3a;font-weight:400;">Media</div>
<svg class="a" style="left:13px;top:45px" width="18" height="16" viewBox="0 0 18 16"><rect x="1.6" y="3.6" width="15" height="11" fill="#fff" stroke="#6e6e6e" stroke-width="1.3"/><rect x="1.6" y="3.3" width="15" height="2.8" fill="#6e6e6e"/><line x1="8.2" y1="6" x2="8.2" y2="14.5" stroke="#6e6e6e" stroke-width="1.1"/><path d="M4.4 0.4V8M0.5 4.3H8.2" stroke="#4caf63" stroke-width="1.1"/></svg>
<svg class="a" style="left:45px;top:46px" width="16" height="16" viewBox="0 0 16 16"><rect x="0.6" y="0.6" width="14.4" height="14.4" fill="#fff" stroke="#6e6e6e" stroke-width="1.1"/><rect x="0.6" y="0.6" width="14.4" height="2.4" fill="#6e6e6e"/><path d="M5.4 3V15M10.2 3V15M0.6 6.9H15M0.6 10.9H15" stroke="#6e6e6e" stroke-width="0.9"/></svg>
<svg class="a" style="left:77px;top:47px" width="16" height="13" viewBox="0 0 16 13"><rect x="0.6" y="0.8" width="14.6" height="11.2" fill="#fff" stroke="#6e6e6e" stroke-width="1"/><path d="M0.6 11.4 L5.5 4.8 L10 9.5 L12 7.8 L15 11 L15 12 L0.6 12Z" fill="#5aa0e6"/><circle cx="11.9" cy="3.7" r="1.1" fill="#ef9a36"/></svg>
<svg class="a" style="left:106px;top:46px" width="19" height="17" viewBox="0 0 19 17"><rect x="1.5" y="0.6" width="14" height="9" fill="#f7f7f7" stroke="#8a8a8a" stroke-width="0.9" stroke-dasharray="1.6 1.2"/><rect x="0.4" y="9.6" width="10" height="6.6" rx="1" fill="#8c8c8c"/><rect x="3" y="8.4" width="4" height="1.6" fill="#8c8c8c"/><circle cx="5.4" cy="12.9" r="2.2" fill="#fff"/><circle cx="5.4" cy="12.9" r="1.2" fill="#8c8c8c"/><path d="M15 10.2V16.2M12 13.2H18" stroke="#4caf63" stroke-width="1.1"/></svg>
<svg class="a" style="left:139px;top:47px" width="17" height="14" viewBox="0 0 17 14"><rect x="2.6" y="1.9" width="13.2" height="10.9" fill="#fff" stroke="#6e6e6e" stroke-width="1"/><rect x="0.5" y="0.5" width="13.2" height="10.2" fill="#fff" stroke="#6e6e6e" stroke-width="1"/><path d="M0.5 10.2 L4.5 4.6 L8.6 8.6 L10.3 7.2 L13.6 10.2 L13.6 10.7 L0.5 10.7Z" fill="#5aa0e6"/><circle cx="10.9" cy="3.3" r="1" fill="#ef9a36"/></svg>
<svg class="a" style="left:172px;top:45px" width="18" height="17" viewBox="0 0 18 17"><rect x="1" y="1" width="10.6" height="10.6" rx="1" fill="#5aa0e6"/><circle cx="11" cy="10.8" r="5.3" fill="#fff" stroke="#6e6e6e" stroke-width="1.1"/></svg>
<svg class="a" style="left:196px;top:45px" width="16" height="17" viewBox="0 0 16 17"><circle cx="10.6" cy="3.8" r="2.9" fill="#5ea2e6"/><path d="M12.8 2.6 L15.6 3.4 L12.8 4.8Z" fill="#5ea2e6"/><path d="M0.4 4.2 C2.2 5.6 4 5.2 5.6 6 L8 4.4 C9.6 4.6 11.6 5.4 12.4 6.8 C12.2 9.4 9.8 11.2 6.6 11.2 C3 11 0.8 8 0.4 4.2Z" fill="#5ea2e6"/><circle cx="9.8" cy="11.6" r="4.6" fill="#fff" stroke="#6e6e6e" stroke-width="1"/><path d="M7 14.2 C7 11.2 9 9 12.4 8.8 C12.4 11.8 10.4 14.2 7 14.2Z" fill="none" stroke="#6e6e6e" stroke-width="0.8"/><path d="M4.8 16.6 L10.2 11.4" stroke="#6e6e6e" stroke-width="0.8"/></svg>
<svg class="a" style="left:223px;top:45px" width="16" height="17" viewBox="0 0 16 17"><path d="M8 1 L15 4.6 V12.4 L8 16 L1 12.4 V4.6Z M1 4.6 L8 8.2 L15 4.6 M8 8.2 V16" fill="#fff" stroke="#5aa0e6" stroke-width="1.1" stroke-linejoin="round"/></svg>
<svg class="a" style="left:252px;top:47px" width="18" height="14" viewBox="0 0 18 14"><path d="M0.6 0.6 H10.5 L15 6 L10.5 11 H0.6 L5 6Z" fill="#9fd8a6"/><rect x="6.3" y="6" width="10" height="6.8" rx="1" fill="#fff" stroke="#6e6e6e" stroke-width="1.1"/><path d="M8.3 8.4H14.3M8.3 10.4H14.3" stroke="#6e6e6e" stroke-width="0.8"/></svg>
<svg class="a" style="left:279px;top:45px" width="16" height="17" viewBox="0 0 16 17"><rect x="1.2" y="7.2" width="4.4" height="8.8" fill="#cfcfcf" stroke="#8e8e8e" stroke-width="0.8"/><rect x="5.6" y="1" width="4.3" height="15" fill="#fff" stroke="#8e8e8e" stroke-width="0.8"/><rect x="9.9" y="4" width="4.4" height="12" fill="#7fb8ee" stroke="#4c93dc" stroke-width="0.8"/></svg>
<svg class="a" style="left:310px;top:47px" width="18" height="13" viewBox="0 0 18 13"><rect x="0.6" y="0.6" width="15" height="11" fill="#fff" stroke="#6e6e6e" stroke-width="1"/><rect x="8.3" y="2.8" width="8.6" height="6.5" fill="#fff" stroke="#5aa0e6" stroke-width="1.5"/><path d="M2.5 5.3 H8.3 V7 H2.5Z" fill="#5aa0e6"/><path d="M5 4.5 L8.3 3 V9 L5 7.5Z" fill="#9dc6ef"/></svg>
<svg class="a" style="left:333px;top:47px" width="17" height="13" viewBox="0 0 17 13"><ellipse cx="5.4" cy="4.8" rx="4.6" ry="3.5" fill="none" stroke="#6e6e6e" stroke-width="1.1"/><ellipse cx="10.6" cy="8.1" rx="4.6" ry="3.5" fill="none" stroke="#6e6e6e" stroke-width="1.1"/></svg>
<svg class="a" style="left:357px;top:46px" width="16" height="16" viewBox="0 0 16 16"><rect x="1" y="1" width="14" height="14" fill="none" stroke="#9a9a9a" stroke-width="1"/><circle cx="1" cy="1" r="0.9" fill="#ef9a36"/><circle cx="15" cy="1" r="0.9" fill="#ef9a36"/><circle cx="1" cy="15" r="0.9" fill="#ef9a36"/><circle cx="15" cy="15" r="0.9" fill="#ef9a36"/><path d="M8 3 L9.5 6.4 L13 6.6 L10.3 8.8 L11.2 12.3 L8 10.3 L4.8 12.3 L5.7 8.8 L3 6.6 L6.5 6.4Z" fill="#f6c15c" stroke="#ef9a36" stroke-width="0.8" stroke-linejoin="round"/></svg>
<svg class="a" style="left:391px;top:45px" width="18" height="16" viewBox="0 0 18 16"><path d="M2 2.6 H16.6 V11.2 H6.5 L3.3 14.8 V11.2 H2Z" fill="#fff" stroke="#6e6e6e" stroke-width="1" stroke-linejoin="round"/><path d="M4 0.2V7.6M0.4 3.8H7.8" stroke="#4caf63" stroke-width="1.1"/></svg>
<svg class="a" style="left:426px;top:46px" width="19" height="15" viewBox="0 0 19 15"><rect x="1.3" y="1.3" width="16" height="12.5" fill="#fff" stroke="#6e6e6e" stroke-width="0.9"/><circle cx="1.3" cy="1.3" r="1" fill="#5aa0e6"/><circle cx="17.3" cy="1.3" r="1" fill="#5aa0e6"/><circle cx="1.3" cy="13.8" r="1" fill="#5aa0e6"/><circle cx="17.3" cy="13.8" r="1" fill="#5aa0e6"/><path d="M6.4 11 L9.3 3.6 L12.2 11 M7.4 8.6 H11.2" fill="none" stroke="#5aa0e6" stroke-width="1.1"/></svg>
<svg class="a" style="left:455px;top:46px" width="13" height="16" viewBox="0 0 13 16"><path d="M1 0.6 H8.5 L12 4 V15.2 H1Z" fill="#fff" stroke="#6e6e6e" stroke-width="1"/><path d="M8.5 0.6 V4 H12" fill="none" stroke="#6e6e6e" stroke-width="0.9"/><rect x="3" y="3" width="5" height="2.4" fill="#ef9a36"/><rect x="3" y="10.2" width="7" height="2.4" fill="#ef9a36"/></svg>
<svg class="a" style="left:483px;top:46px" width="15" height="16" viewBox="0 0 15 16"><path d="M0.8 12 C3 10.8 6 6 9.5 1.2 L12 14.4 M4.4 8.6 L11.6 8" fill="none" stroke="#3b8fdc" stroke-width="1.6" stroke-linecap="round" stroke-linejoin="round"/></svg>
<svg class="a" style="left:507px;top:46px" width="18" height="17" viewBox="0 0 18 17"><rect x="0.8" y="2" width="15" height="13.4" fill="#fff" stroke="#6e6e6e" stroke-width="1"/><path d="M0.8 4.4H15.8M4 0.6V3M12.6 0.6V3" stroke="#6e6e6e" stroke-width="1"/><circle cx="13" cy="12.2" r="3.6" fill="#fff" stroke="#5aa0e6" stroke-width="1"/><path d="M13 10.2 V12.4 H14.8" fill="none" stroke="#6e6e6e" stroke-width="0.8"/></svg>
<svg class="a" style="left:532px;top:47px" width="17" height="13" viewBox="0 0 17 13"><rect x="0.8" y="0.8" width="15.2" height="11.6" fill="#fff" stroke="#6e6e6e" stroke-width="1.6"/><path d="M7.3 4 L6.6 9 M9.6 4 L8.9 9 M5.8 5.6 H10.6 M5.5 7.4 H10.3" stroke="#5aa0e6" stroke-width="0.8"/></svg>
<svg class="a" style="left:557px;top:46px" width="16" height="16" viewBox="0 0 16 16"><path d="M4.2 1 H14.8 V15 H4.2Z" fill="#fff" stroke="#6e6e6e" stroke-width="1"/><rect x="0.8" y="3.8" width="7.8" height="7.8" fill="#fff" stroke="#5aa0e6" stroke-width="1"/><rect x="0.8" y="3.8" width="7.8" height="2" fill="#5aa0e6"/></svg>
<svg class="a" style="left:593px;top:47px" width="15" height="14" viewBox="0 0 15 14"><path d="M0.8 1.4 H13.8 M4.6 1.4 V13 M9.4 1.4 V11 C9.4 12.6 10.5 13 12.6 12.8" fill="none" stroke="#555" stroke-width="1.2"/></svg>
<svg class="a" style="left:619px;top:47px" width="15" height="14" viewBox="0 0 15 14"><path d="M1 13 H5 V11.6 C2.6 10.4 1.4 8.4 1.4 6.2 C1.4 3 4 0.8 7.2 0.8 C10.4 0.8 13 3 13 6.2 C13 8.4 11.8 10.4 9.4 11.6 V13 H13.4" fill="none" stroke="#555" stroke-width="1.2"/></svg>
<svg class="a" style="left:650px;top:47px" width="17" height="13" viewBox="0 0 17 13"><rect x="0.8" y="0.8" width="15" height="11.4" fill="#f7f7f7" stroke="#6e6e6e" stroke-width="1.1"/><path d="M3.3 0.8 V12.2 M13.3 0.8 V12.2" stroke="#6e6e6e" stroke-width="0.8"/><path d="M1.9 2.4V3.4M1.9 4.9V5.9M1.9 7.4V8.4M1.9 9.9V10.9M14.7 2.4V3.4M14.7 4.9V5.9M14.7 7.4V8.4M14.7 9.9V10.9" stroke="#6e6e6e" stroke-width="0.9"/></svg>
<svg class="a" style="left:674px;top:46px" width="16" height="16" viewBox="0 0 16 16"><path d="M1 5.4 H4 L8.6 1.6 V14.4 L4 10.6 H1Z" fill="#fff" stroke="#6e6e6e" stroke-width="1" stroke-linejoin="round"/><path d="M10.4 5.8 C11.3 7 11.3 9 10.4 10.2 M12.2 4 C13.8 6.3 13.8 9.7 12.2 12 M14 2.2 C16.3 5.6 16.3 10.4 14 13.8" fill="none" stroke="#6e6e6e" stroke-width="0.9"/></svg>
<svg class="a" style="left:700px;top:46px" width="19" height="17" viewBox="0 0 19 17"><rect x="2.6" y="0.5" width="13.2" height="10.6" fill="#f7f7f7" stroke="#8a8a8a" stroke-width="0.9" stroke-dasharray="1.6 1.2"/><rect x="0.8" y="10.6" width="8.4" height="5.4" rx="0.8" fill="#8c8c8c"/><path d="M9.2 12.2 L11.6 11 V15.6 L9.2 14.4Z" fill="#8c8c8c"/><path d="M15.6 10.4V16.4M12.6 13.4H18.6" stroke="#4caf63" stroke-width="1.1"/></svg>
<svg class="a" style="left:1008.5px;top:85.5px" width="7" height="5" viewBox="0 0 7 5"><path d="M0.8 0.8 L3.5 3.6 L6.2 0.8" fill="none" stroke="#555" stroke-width="0.9"/></svg>
<svg class="a" style="left:7.5px;top:7.6px" width="10" height="10" viewBox="0 0 10 10"><circle cx="5.1" cy="5" r="4.6" fill="#d9492b"/><path d="M5.1 0.4 A4.6 4.6 0 0 1 9.7 5 H5.1Z" fill="#ee7555"/><rect x="1" y="2.5" width="5" height="5" rx="0.7" fill="#b8381c"/><path d="M2.7 6.4 V3.6 H3.9 Q5 3.6 5 4.5 Q5 5.4 3.9 5.4 H2.7" fill="none" stroke="#fff" stroke-width="0.75"/></svg>
<div class="t" style="left:25.50px;top:10.20px;font-size:6.15px;color:#333;font-weight:400;transform-origin:0 85%;transform:scaleY(1.18)">AutoSave</div>
<div class="a" style="left:56.5px;top:7px;width:24px;height:11px;border:0.7px solid #6a6a6a;border-radius:6px;background:#f3f3f6"></div>
<div class="a" style="left:58.6px;top:9.2px;width:6.6px;height:6.6px;border-radius:50%;background:#4a4a4a"></div>
<div class="t" style="left:67.80px;top:9.99px;font-size:6.2px;color:#333;font-weight:400;">Off</div>
<svg class="a" style="left:86.5px;top:8px" width="10" height="10" viewBox="0 0 10 10"><rect x="0.4" y="0.3" width="8.8" height="8.8" rx="1.2" fill="#bb62cf"/><rect x="2.3" y="1.2" width="4.6" height="2" fill="#fff"/><rect x="2.6" y="6.6" width="4.2" height="1.8" fill="#fff"/></svg>
<svg class="a" style="left:101.8px;top:7.5px" width="11" height="11" viewBox="0 0 11 11"><path d="M1.6 1.6 V5.2 H5.2" fill="none" stroke="#555" stroke-width="0.9"/><path d="M1.9 5 C3.2 2.8 6.8 2 8.4 4.2 C9.8 6.2 8.4 8.8 5.6 10" fill="none" stroke="#555" stroke-width="0.9"/></svg>
<svg class="a" style="left:114px;top:11px" width="4" height="3" viewBox="0 0 4 3"><path d="M0.5 0.7 L2 2.2 L3.5 0.7" fill="none" stroke="#555" stroke-width="0.8"/></svg>
<svg class="a" style="left:122.5px;top:8px" width="10" height="10" viewBox="0 0 10 10"><path d="M5.2 0.9 A4.1 4.1 0 1 1 1.6 2.6" fill="none" stroke="#b4b4b4" stroke-width="0.9"/><path d="M3.2 0.6 L5.4 0.9 L4.4 3" fill="none" stroke="#b4b4b4" stroke-width="0.8"/></svg>
<svg class="a" style="left:138.8px;top:8px" width="9" height="10" viewBox="0 0 9 10"><rect x="0.5" y="0.5" width="7.6" height="5.6" fill="#fff" stroke="#666" stroke-width="0.9"/><circle cx="4.3" cy="3.3" r="1" fill="#2e9d47"/><path d="M4.3 6.1 V9 M2.4 9 H6.2" stroke="#666" stroke-width="0.9"/></svg>
<svg class="a" style="left:155.5px;top:10.5px" width="6" height="5" viewBox="0 0 6 5"><path d="M0.8 0.6 H4.6 M0.8 2 H4.6" stroke="#444" stroke-width="0.7"/><path d="M1.4 3 L2.7 4.4 L4 3Z" fill="#444"/></svg>
<div class="t" style="left:174.00px;top:10.47px;font-size:6.42px;color:#333;font-weight:400;">Geometric color block&nbsp; -&nbsp; PowerPoint</div>
<div class="a" style="left:392px;top:4.5px;width:249px;height:16.5px;background:#fafafa;border-radius:4px;box-shadow:0 0 0 0.6px #d8d8dc, 0 0.6px 0.8px rgba(0,0,0,.12)"></div>
<svg class="a" style="left:403px;top:8px" width="9" height="9" viewBox="0 0 9 9"><circle cx="5.4" cy="3.5" r="2.8" fill="none" stroke="#555" stroke-width="0.9"/><path d="M3.4 5.5 L0.6 8.3" stroke="#555" stroke-width="1"/></svg>
<div class="t" style="left:417.80px;top:10.12px;font-size:6.75px;color:#5f5f5f;font-weight:400;">Search</div>
<svg class="a" style="left:854px;top:8px" width="10" height="10" viewBox="0 0 10 10"><path d="M5 0.7 L9.6 9.2 H0.4Z" fill="#f2b33d" stroke="#e09a1f" stroke-width="0.5" stroke-linejoin="round"/><path d="M5 3.2 V6.4" stroke="#5b3a00" stroke-width="1"/><circle cx="5" cy="7.8" r="0.55" fill="#5b3a00"/></svg>
<div class="t" style="left:869.60px;top:10.57px;font-size:6.4px;color:#333;font-weight:400;">Mahima Bhatnagar</div>
<div class="a" style="left:927.6px;top:6.2px;width:13.4px;height:13.4px;border-radius:50%;background:#3f8a1c"></div>
<div class="t" style="left:834.30px;width:200px;text-align:center;top:9.90px;font-size:5.4px;color:#e8f5e0;font-weight:400;">MB</div>
<div class="a" style="left:957px;top:12.5px;width:6.6px;height:0.9px;background:#444"></div>
<svg class="a" style="left:982px;top:9px" width="8" height="8" viewBox="0 0 8 8"><rect x="0.6" y="2" width="5" height="5" rx="0.8" fill="none" stroke="#444" stroke-width="0.9"/><path d="M2.2 1 H6 Q7 1 7 2 V5.8" fill="none" stroke="#444" stroke-width="0.9"/></svg>
<svg class="a" style="left:1008px;top:10px" width="7" height="7" viewBox="0 0 7 7"><path d="M0.6 0.6 L6.2 6.2 M6.2 0.6 L0.6 6.2" stroke="#444" stroke-width="0.9"/></svg>
<div class="t" style="left:11.40px;top:31.31px;font-size:6.85px;color:#333;font-weight:400;">File</div>
<div class="t" style="left:36.00px;top:31.31px;font-size:6.85px;color:#333;font-weight:400;">Home</div>
<div class="t" style="left:66.00px;top:31.31px;font-size:6.85px;color:#333;font-weight:400;">Insert</div>
<div class="t" style="left:94.60px;top:31.31px;font-size:6.85px;color:#333;font-weight:400;">Draw</div>
<div class="t" style="left:121.00px;top:31.31px;font-size:6.85px;color:#333;font-weight:400;">Design</div>
<div class="t" style="left:153.80px;top:31.31px;font-size:6.85px;color:#333;font-weight:400;">Transitions</div>
<div class="t" style="left:199.00px;top:31.31px;font-size:6.85px;color:#333;font-weight:400;">Animations</div>
<div class="t" style="left:245.00px;top:31.31px;font-size:6.85px;color:#333;font-weight:400;">Slide Show</div>
<div class="t" style="left:289.50px;top:31.31px;font-size:6.85px;color:#333;font-weight:400;">Record</div>
<div class="t" style="left:322.60px;top:31.31px;font-size:6.85px;color:#333;font-weight:400;">Review</div>
<div class="t" style="left:354.80px;top:31.31px;font-size:6.85px;color:#333;font-weight:400;">View</div>
<div class="t" style="left:379.70px;top:31.31px;font-size:6.85px;color:#333;font-weight:400;">Help</div>
<div class="t" style="left:405.50px;top:31.31px;font-size:6.85px;color:#c4452b;font-weight:400;">Shape Format</div>
<div class="a" style="left:66px;top:38.2px;width:18.5px;height:1.6px;background:#c4452b;border-radius:1px"></div>
<div class="a" style="left:953.6px;top:27px;width:16.8px;height:12.2px;background:#fff;border:0.8px solid #bdbdbd;border-radius:2px"></div>
<svg class="a" style="left:958px;top:30px" width="8" height="7" viewBox="0 0 8 7"><path d="M0.6 0.6 H7.2 V4.6 H3 L1.4 6.2 V4.6 H0.6Z" fill="none" stroke="#333" stroke-width="0.8" stroke-linejoin="round"/></svg>
<div class="a" style="left:975px;top:27px;width:42.5px;height:12.6px;background:#c43e1c;border-radius:2.5px"></div>
<svg class="a" style="left:978.6px;top:29.6px" width="8" height="8" viewBox="0 0 8 8"><path d="M0.8 3.6 V7.2 H7 V5" fill="none" stroke="#fff" stroke-width="0.8"/><path d="M2.2 5.8 C2.6 3.6 4 2.6 6 2.6 M4.8 1 L6.6 2.6 L4.8 4.2" fill="none" stroke="#fff" stroke-width="0.8"/></svg>
<div class="t" style="left:987.20px;top:30.73px;font-size:6.7px;color:#fff;font-weight:400;">Share</div>
<svg class="a" style="left:1011px;top:32px" width="5" height="3" viewBox="0 0 5 3"><path d="M0.5 0.5 L2.5 2.5 L4.5 0.5Z" fill="#fff"/></svg>
<div class="a" style="left:166.3px;top:391.5px;width:4.8px;height:202px;background:#7a7a7a;border-radius:2.4px"></div>
<svg class="a" style="left:165px;top:100px" width="9" height="6" viewBox="0 0 9 6"><path d="M1.5 5 L4.5 1.2 L7.5 5Z" fill="#6a6a6a"/></svg>
<svg class="a" style="left:165px;top:595px" width="9" height="6" viewBox="0 0 9 6"><path d="M1.5 1 L4.5 4.8 L7.5 1Z" fill="#6a6a6a"/></svg>
<svg class="a" style="left:1016px;top:98px" width="8" height="6" viewBox="0 0 8 6"><path d="M1 5 L4 1.2 L7 5Z" fill="#6a6a6a"/></svg>
<div class="a" style="left:1017px;top:497.7px;width:5px;height:32px;background:#7a7a7a;border-radius:2.5px"></div>
<svg class="a" style="left:1016px;top:565px" width="8" height="24" viewBox="0 0 8 24"><path d="M1.2 1.5 L4 4.6 L6.8 1.5Z" fill="#6a6a6a"/><path d="M4 8.6 L6.6 11.6 H1.4Z M1.4 12.4 H6.6" fill="#6a6a6a" stroke="#6a6a6a" stroke-width="0.6"/><path d="M1.4 16.6 H6.6 M1.4 17.6 L4 20.6 L6.6 17.6Z" fill="#6a6a6a" stroke="#6a6a6a" stroke-width="0.6"/></svg>
<div class="t" style="left:6.60px;top:605.23px;font-size:5.95px;color:#333;font-weight:400;transform-origin:0 100%;transform:scaleY(1.15)">Slide 13 of 14</div>
<svg class="a" style="left:52.5px;top:604px" width="9" height="8" viewBox="0 0 9 8"><path d="M0.6 0.8 H3.6 Q4.4 0.8 4.4 1.6 V7.2 Q4.4 6.6 3.6 6.6 H0.6Z M8.2 0.8 H5.2 Q4.4 0.8 4.4 1.6 V7.2 Q4.4 6.6 5.2 6.6 H8.2Z" fill="none" stroke="#555" stroke-width="0.8"/><path d="M2.6 2.4 V4.8" stroke="#555" stroke-width="0.7"/></svg>
<div class="t" style="left:70.30px;top:605.21px;font-size:6.1px;color:#333;font-weight:400;transform-origin:0 100%;transform:scaleY(1.15)">English (India)</div>
<svg class="a" style="left:140px;top:603.5px" width="9" height="10" viewBox="0 0 9 10"><circle cx="3.2" cy="1.4" r="0.9" fill="#555"/><path d="M0.6 3 H5.8 M3.2 3 V5.6 L1.8 8.8 M3.2 5.6 L4.6 8.8" fill="none" stroke="#555" stroke-width="0.8"/><path d="M5.6 7 L6.6 8.2 L8.4 5.6" fill="none" stroke="#555" stroke-width="0.8"/></svg>
<div class="t" style="left:150.00px;top:605.19px;font-size:6.2px;color:#333;font-weight:400;transform-origin:0 100%;transform:scaleY(1.15)">Accessibility: Good to go</div>
<svg class="a" style="left:793.5px;top:603.5px" width="9" height="9" viewBox="0 0 9 9"><path d="M4.5 0.6 L2.6 2.6 M4.5 0.6 L6.4 2.6" fill="none" stroke="#666" stroke-width="0.8"/><path d="M0.6 4.2 H8.4 M0.6 6 H8.4 M0.6 7.8 H8.4" stroke="#777" stroke-width="0.9"/></svg>
<div class="t" style="left:803.80px;top:605.23px;font-size:5.95px;color:#333;font-weight:400;transform-origin:0 100%;transform:scaleY(1.15)">Notes</div>
<div class="a" style="left:830px;top:603px;width:21px;height:11px;background:#dcdcdc"></div>
<svg class="a" style="left:836px;top:604.5px" width="9" height="7" viewBox="0 0 9 7"><rect x="0.6" y="0.6" width="7.8" height="5.8" fill="none" stroke="#555" stroke-width="0.9"/><path d="M2.2 2.4 H6.8 M2.2 4 H5.4" stroke="#555" stroke-width="0.8"/></svg>
<svg class="a" style="left:857.5px;top:604.5px" width="9" height="8" viewBox="0 0 9 8"><rect x="0.6" y="0.6" width="3" height="2.6" fill="none" stroke="#555" stroke-width="0.8"/><rect x="5" y="0.6" width="3" height="2.6" fill="none" stroke="#555" stroke-width="0.8"/><rect x="0.6" y="4.6" width="3" height="2.6" fill="none" stroke="#555" stroke-width="0.8"/><rect x="5" y="4.6" width="3" height="2.6" fill="none" stroke="#555" stroke-width="0.8"/></svg>
<svg class="a" style="left:878.5px;top:604px" width="9" height="8" viewBox="0 0 9 8"><path d="M0.6 1 H3.8 Q4.4 1 4.4 1.6 V7.4 M8.2 1 H5 Q4.4 1 4.4 1.6 M0.6 1 V6.8 H8.2 V1" fill="none" stroke="#555" stroke-width="0.8"/></svg>
<svg class="a" style="left:899.5px;top:604px" width="9" height="9" viewBox="0 0 9 9"><rect x="0.6" y="0.6" width="7.6" height="5" fill="none" stroke="#555" stroke-width="0.8"/><path d="M4.4 5.6 V8.4 M2.8 8.4 H6" stroke="#555" stroke-width="0.8"/><rect x="3" y="1.8" width="2.8" height="2.4" fill="#555"/></svg>
<div class="a" style="left:918px;top:608px;width:4.2px;height:0.8px;background:#555"></div>
<div class="a" style="left:925px;top:608px;width:53px;height:0.8px;background:#6a6a6a"></div>
<div class="a" style="left:951.6px;top:605.4px;width:4px;height:6px;background:#555;border-radius:1px"></div>
<div class="a" style="left:975.5px;top:601.5px;width:35.5px;height:16px;background:#fff;border-radius:8px;box-shadow:0 0 0 0.6px #c9c9c9"></div>
<svg class="a" style="left:980px;top:604px" width="11" height="10" viewBox="0 0 11 10"><circle cx="5" cy="5" r="3.6" fill="none" stroke="#15a386" stroke-width="1.8"/><circle cx="5" cy="5" r="0.9" fill="#15a386"/></svg>
<div class="a" style="left:992.8px;top:601.8px;width:17.4px;height:17.4px;border-radius:50%;background:#0f8f76"></div>
<svg class="a" style="left:995.5px;top:604.5px" width="12" height="12" viewBox="0 0 12 12"><path d="M9.6 3 A4.4 4.4 0 1 0 10 7.4 H6.4" fill="none" stroke="#fff" stroke-width="1.8"/></svg>
<svg class="a" style="left:1013px;top:603px" width="10" height="10" viewBox="0 0 10 10"><path d="M5 0.8 L3.6 2.4 H6.4Z M5 9.2 L3.6 7.6 H6.4Z M0.8 5 L2.4 3.6 V6.4Z M9.2 5 L7.6 3.6 V6.4Z" fill="#555"/><rect x="3" y="3" width="4" height="4" fill="none" stroke="#555" stroke-width="0.8"/></svg>
<svg class="a" style="left:564px;top:388px" width="18" height="17" viewBox="0 0 18 17"><rect x="0.8" y="0.9" width="14.8" height="11.3" fill="#f7f6f2" stroke="#8a8a8a" stroke-width="0.9"/><path d="M0.8 9 L4.6 4.6 L8 8" fill="none" stroke="#8a8a8a" stroke-width="0.8"/><circle cx="12.6" cy="3.4" r="0.8" fill="#8a8a8a"/><circle cx="10.6" cy="9" r="3.1" fill="#fff" stroke="#7cb4ea" stroke-width="1"/><path d="M12.8 11.2 L16.4 14.8" stroke="#7cb4ea" stroke-width="1.1"/></svg>
<svg class="a" style="left:583.5px;top:388px" width="17" height="17" viewBox="0 0 17 17"><rect x="0.6" y="0.9" width="14.8" height="11.3" fill="#f7f6f2" stroke="#8a8a8a" stroke-width="0.9"/><path d="M0.6 9 L4.4 4.6 L7.6 8" fill="none" stroke="#8a8a8a" stroke-width="0.8"/><circle cx="12.4" cy="3.4" r="0.8" fill="#8a8a8a"/><rect x="6.4" y="6.9" width="9.8" height="6.4" fill="#fff" stroke="#7cb4ea" stroke-width="0.9"/><path d="M11.3 13.3 V15.4 M9 15.6 H13.6" stroke="#7cb4ea" stroke-width="0.9"/></svg>
<svg class="a" style="left:602.5px;top:386.5px" width="17" height="18" viewBox="0 0 17 18"><path d="M0.4 4.5 C2 5.5 3.8 5.2 5.4 5.8 C5.8 2.6 8 1 10.3 1.4 C12 1.7 12.8 2.8 13 3.6 L16.4 3.8 L13.6 5.8 C13.8 9 11 11.6 6.6 11.6 C3 11.2 0.6 8 0.4 4.5Z" fill="#7cb4ea"/><circle cx="11.4" cy="11.8" r="4.8" fill="#fbfaf6" stroke="#8a8a8a" stroke-width="0.9"/><path d="M5.6 17.4 L14 9.2" stroke="#8a8a8a" stroke-width="0.8"/></svg>
<svg class="a" style="left:621.5px;top:388px" width="17" height="14" viewBox="0 0 17 14"><path d="M0.4 0.4 H10.6 L14.8 5.4 L10.6 10.5 H0.4 L4.6 5.4Z" fill="#a9dcb0"/><rect x="5.8" y="5.4" width="10.4" height="7" rx="1" fill="#fbfaf6" stroke="#8a8a8a" stroke-width="0.9"/><path d="M7.8 8 H14.2 M7.8 10 H14.2" stroke="#8a8a8a" stroke-width="0.7"/></svg>
<svg class="a" style="left:564.5px;top:405.5px" width="17" height="17" viewBox="0 0 17 17"><path d="M6.6 0.8 L13.2 4.2 V11.4 L6.6 14.8 L0.6 11.4 V4.2Z M0.6 4.2 L6.6 7.6 L13.2 4.2 M6.6 7.6 V14.8" fill="#fbfaf6" stroke="#8a8a8a" stroke-width="0.9" stroke-linejoin="round"/><circle cx="12.4" cy="12.4" r="4" fill="#cfe4f8" stroke="#7cb4ea" stroke-width="0.9"/><path d="M8.4 12.4 H16.4 M12.4 8.4 V16.4 M9.2 10.2 H15.6 M9.2 14.6 H15.6 M10.6 8.8 V16 M14.2 8.8 V16" stroke="#7cb4ea" stroke-width="0.6"/></svg>
<svg class="a" style="left:583.5px;top:408px" width="16" height="13" viewBox="0 0 16 13"><rect x="0.6" y="0.6" width="14.6" height="11" fill="#f9f8f4" stroke="#8a8a8a" stroke-width="0.9"/><path d="M2.6 0.6 V11.6 M13.2 0.6 V11.6" stroke="#8a8a8a" stroke-width="0.6"/><path d="M1.6 2V2.8M1.6 4.6V5.4M1.6 7.2V8M1.6 9.8V10.6M14.2 2V2.8M14.2 4.6V5.4M14.2 7.2V8M14.2 9.8V10.6" stroke="#8a8a8a" stroke-width="0.8"/></svg>
<svg class="a" style="left:602.5px;top:406px" width="16" height="16" viewBox="0 0 16 16"><rect x="0.6" y="0.6" width="14.6" height="14.8" fill="#fbfaf6" stroke="#8a8a8a" stroke-width="0.9"/><rect x="0.6" y="0.6" width="14.6" height="2" fill="#8a8a8a"/><path d="M5.5 2.6 V15.4 M10.4 2.6 V15.4 M0.6 6.8 H15.2 M0.6 11 H15.2" stroke="#8a8a8a" stroke-width="0.7"/></svg>
<svg class="a" style="left:622.5px;top:406px" width="15" height="16" viewBox="0 0 15 16"><rect x="0.6" y="6" width="4.4" height="9.6" fill="#d3d3d0" stroke="#8a8a8a" stroke-width="0.7"/><rect x="5" y="0.6" width="4.3" height="15" fill="#fff" stroke="#8a8a8a" stroke-width="0.7"/><rect x="9.3" y="3.4" width="4.4" height="12.2" fill="#a8cdf1" stroke="#7cb4ea" stroke-width="0.7"/></svg>
<div class="a" style="left:276.2px;top:95.0px;width:113.5px;height:61.8px;background:#fff;border:0.8px solid #c6c6c6;border-radius:2px;box-shadow:0 1px 3px rgba(0,0,0,.22)"></div>
<div class="t" style="left:282.00px;top:99.82px;font-size:6.0px;color:#444;font-weight:700;">Add a Chart</div>
<div class="t" style="left:282.00px;top:113.28px;font-size:6.31px;color:#555;font-weight:400;">Make it easy to spot patterns and</div>
<div class="t" style="left:282.00px;top:121.13px;font-size:6.31px;color:#555;font-weight:400;">trends in your data by inserting a</div>
<div class="t" style="left:282.00px;top:128.98px;font-size:6.31px;color:#555;font-weight:400;">bar, area, or line chart.</div>
<div class="a" style="left:278.8px;top:139.2px;width:108px;height:0.7px;background:#e4e4e4"></div>
<svg class="a" style="left:280.6px;top:143.8px" width="10" height="10" viewBox="0 0 10 10"><circle cx="4.7" cy="4.6" r="4" fill="none" stroke="#3a8fd8" stroke-width="0.9"/><path d="M3.3 3.6 C3.3 1.8 6.2 1.8 6.2 3.6 C6.2 4.8 4.7 4.8 4.7 6" fill="none" stroke="#3a8fd8" stroke-width="0.9"/><circle cx="4.7" cy="7.4" r="0.55" fill="#3a8fd8"/></svg>
<div class="t" style="left:294.50px;top:145.76px;font-size:6.48px;color:#2f5f9a;font-weight:700;">Tell me more</div>
<svg class="a" style="left:0;top:0" width="1024" height="614"><path d="M200.11 189.22 L258.16 96.26 L254.40 95.25 L267.40 87.00 L265.14 102.23 L262.69 99.20 L201.29 189.98Z" fill="#f80d0d" stroke="#f80d0d" stroke-width="0.5" stroke-linejoin="round"/></svg>
</body></html>
